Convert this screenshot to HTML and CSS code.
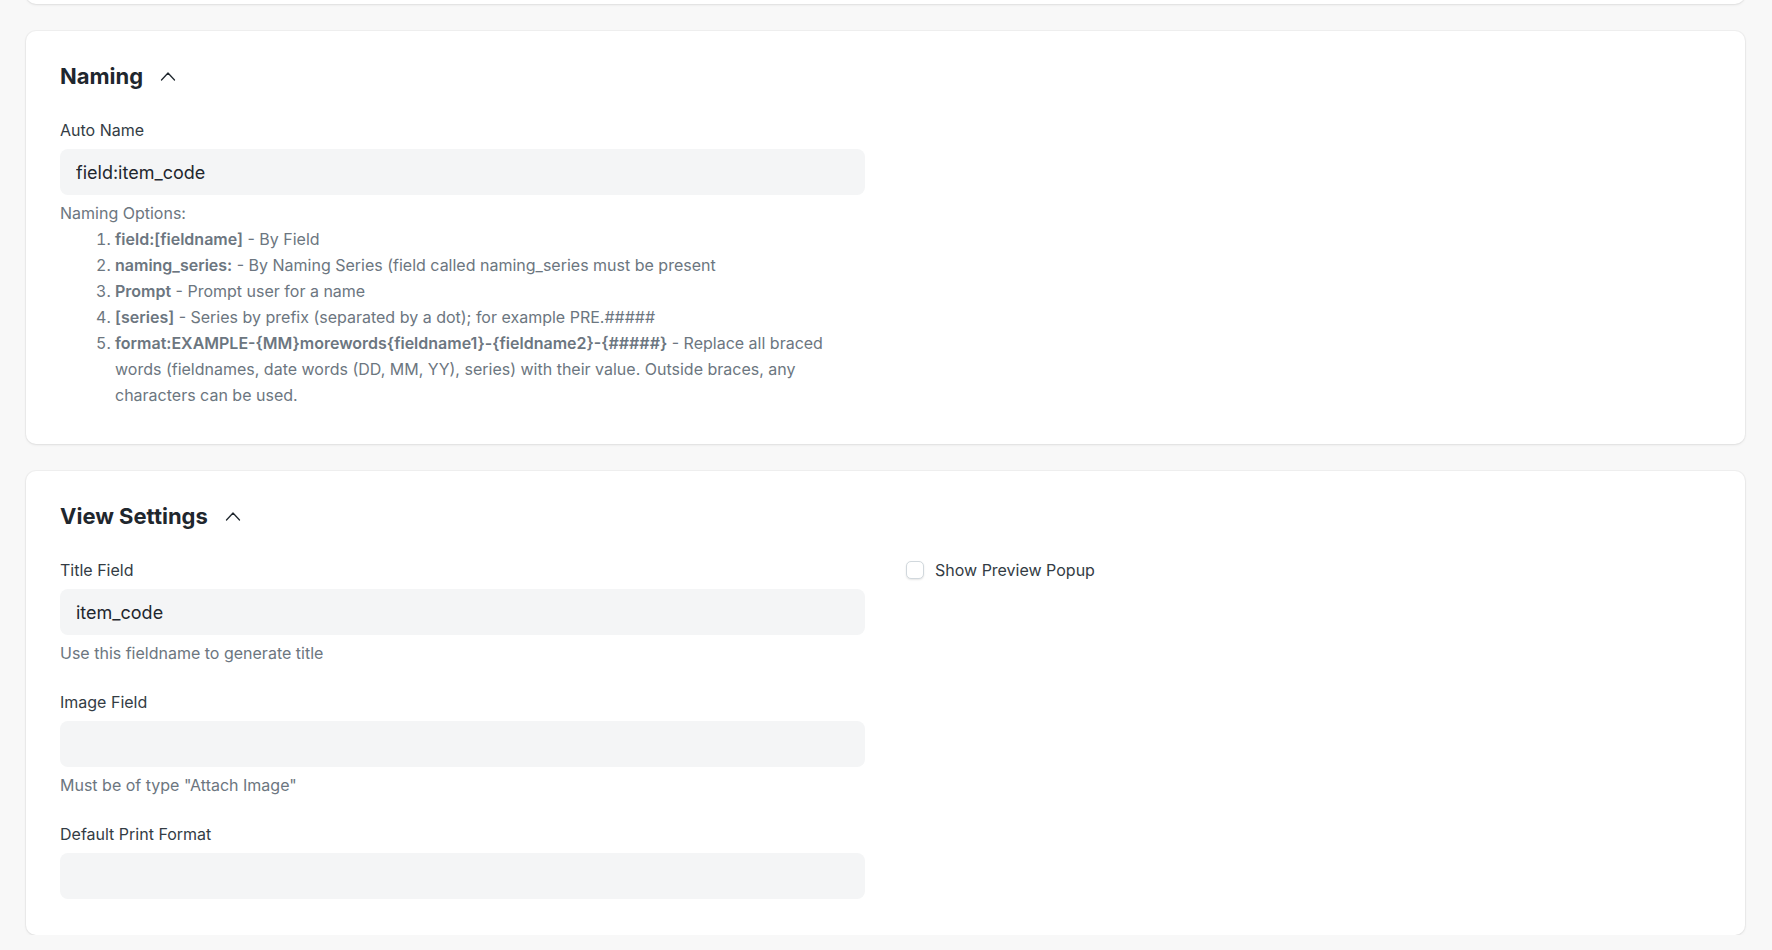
FILE: index.html
```html
<!DOCTYPE html>
<html lang="en">
<head>
    <meta charset="UTF-8">
    <meta name="viewport" content="width=device-width, initial-scale=1.0">
    <title>DocType Settings</title>
    <link rel="stylesheet" href="styles.css">
</head>
<body>

<div class="page">
    <div class="card card-prev"></div>

    <section class="card">
        <div class="section-head">
            <h2>Naming</h2>
            <svg class="chevron" viewBox="0 0 16 10" fill="none" stroke="currentColor" stroke-width="1.3" stroke-linecap="round" stroke-linejoin="round">
                <polyline points="1.5,9 8,2 14.5,9"/>
            </svg>
        </div>
        <div class="section-body">
            <div class="col">
                <div class="field">
                    <label>Auto Name</label>
                    <input class="control" type="text" value="field:item_code" readonly>
                    <div class="help">
                        Naming Options:
                        <ol>
                            <li><b>field:[fieldname]</b> - By Field</li>
                            <li><b>naming_series:</b> - By Naming Series (field called naming_series must be present</li>
                            <li><b>Prompt</b> - Prompt user for a name</li>
                            <li><b>[series]</b> - Series by prefix (separated by a dot); for example PRE.#####</li>
                            <li><b>format:EXAMPLE-{MM}morewords{fieldname1}-{fieldname2}-{#####}</b> - Replace all braced words (fieldnames, date words (DD, MM, YY), series) with their value. Outside braces, any characters can be used.</li>
                        </ol>
                    </div>
                </div>
            </div>
            <div class="col"></div>
        </div>
    </section>

    <section class="card">
        <div class="section-head">
            <h2>View Settings</h2>
            <svg class="chevron" viewBox="0 0 16 10" fill="none" stroke="currentColor" stroke-width="1.3" stroke-linecap="round" stroke-linejoin="round">
                <polyline points="1.5,9 8,2 14.5,9"/>
            </svg>
        </div>
        <div class="section-body">
            <div class="col">
                <div class="field">
                    <label>Title Field</label>
                    <input class="control" type="text" value="item_code" readonly>
                    <div class="help">Use this fieldname to generate title</div>
                </div>
                <div class="field">
                    <label>Image Field</label>
                    <input class="control" type="text" value="" readonly>
                    <div class="help">Must be of type "Attach Image"</div>
                </div>
                <div class="field">
                    <label>Default Print Format</label>
                    <input class="control" type="text" value="" readonly>
                </div>
            </div>
            <div class="col">
                <label class="check">
                    <span class="box"></span>
                    Show Preview Popup
                </label>
            </div>
        </div>
    </section>
</div>

</body>
</html>
```

FILE: styles.css
```css
body {
    margin: 0;
    background: #f8f8f8;
    font-family: Inter, "Noto Sans", sans-serif;
    color: #1f272e;
}
.page {
    display: flex;
    flex-direction: column;
    gap: 27px;
    padding: 0 27px 0 26px;
}
.card {
    background: #fff;
    border-radius: 10px;
    box-shadow: 0 0 0 1px rgba(0, 0, 0, 0.03), 0 1px 3px rgba(0, 0, 0, 0.08);
    padding: 31px 34px 36px;
}
.card-prev {
    height: 40px;
    margin-top: -36px;
    padding: 0;
}
.section-head {
    display: flex;
    align-items: center;
    height: 28px;
    margin-bottom: 28px;
}
.section-head h2 {
    margin: 0;
    font-size: 22px;
    font-weight: 700;
    line-height: 28px;
}
.chevron {
    width: 16px;
    height: 10px;
    margin-left: 17px;
    color: #1f272e;
}
.section-body {
    display: grid;
    grid-template-columns: 1fr 1fr;
    column-gap: 41px;
}
.col {
    display: flex;
    flex-direction: column;
    gap: 24px;
}
.field label {
    display: block;
    font-size: 16px;
    line-height: 24px;
    margin-bottom: 7px;
    color: #333c44;
}
.control {
    display: block;
    width: 100%;
    height: 46px;
    box-sizing: border-box;
    border: 0;
    border-radius: 8px;
    background: #f4f5f6;
    padding: 0 16px;
    font-family: Inter, "Noto Sans", sans-serif;
    font-size: 18px;
    color: #1f272e;
    outline: none;
}
.help {
    margin-top: 5px;
    font-size: 16px;
    line-height: 26px;
    color: #6c7680;
}
.help ol {
    margin: 0;
    padding-left: 55px;
}
.help b {
    font-weight: 600;
}
.check {
    display: flex;
    align-items: center;
    gap: 11px;
    height: 24px;
    font-size: 16px;
    color: #333c44;
}
.check .box {
    width: 18px;
    height: 18px;
    box-sizing: border-box;
    border: 1px solid #d1d8dd;
    border-radius: 5px;
    background: #fff;
    box-shadow: 0 1px 2px rgba(0, 0, 0, 0.1);
}
```
